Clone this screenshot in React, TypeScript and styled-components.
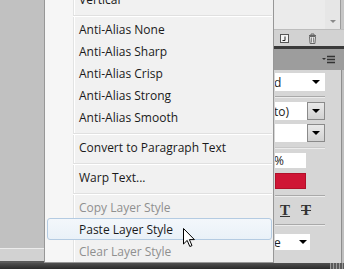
import styled, { createGlobalStyle } from 'styled-components';

const GlobalStyle = createGlobalStyle`
  html, body {
    margin: 0;
    padding: 0;
    background: #c0c0c0;
  }
`;

type Entry =
  | { kind: 'item'; label: string; disabled?: boolean; hot?: boolean }
  | { kind: 'sep' };

const entries: Entry[] = [
  { kind: 'item', label: 'Vertical' },
  { kind: 'sep' },
  { kind: 'item', label: 'Anti-Alias None' },
  { kind: 'item', label: 'Anti-Alias Sharp' },
  { kind: 'item', label: 'Anti-Alias Crisp' },
  { kind: 'item', label: 'Anti-Alias Strong' },
  { kind: 'item', label: 'Anti-Alias Smooth' },
  { kind: 'sep' },
  { kind: 'item', label: 'Convert to Paragraph Text' },
  { kind: 'sep' },
  { kind: 'item', label: 'Warp Text...' },
  { kind: 'sep' },
  { kind: 'item', label: 'Copy Layer Style', disabled: true },
  { kind: 'item', label: 'Paste Layer Style', hot: true },
  { kind: 'item', label: 'Clear Layer Style', disabled: true },
];

const App = () => {
  return (
    <Root>
      <GlobalStyle />
      <Main>
        <LeftArea>
          <Canvas />
          <StatusStrip />
        </LeftArea>

        <Menu>
          <MenuList>
            {entries.map((e, i) =>
              e.kind === 'sep' ? (
                <Separator key={i} />
              ) : (
                <MenuItem key={i} $disabled={e.disabled} $hot={e.hot}>
                  {e.label}
                </MenuItem>
              )
            )}
          </MenuList>
        </Menu>

        <Panel>
          <TopArea>
            <ListBox />
            <ScrollTrack>
              <SmallArrow />
            </ScrollTrack>
            <PanelEdge />
          </TopArea>
          <IconRow>
            <svg width="9" height="9" viewBox="0 0 9 9">
              <rect x="0.5" y="0.5" width="8" height="8" fill="#f4f4f4" stroke="#555" />
              <path d="M5 2.5v4H2.5" fill="none" stroke="#222" />
            </svg>
            <svg width="9" height="11" viewBox="0 0 9 11">
              <path d="M1 2.5h7M3 2.5V1h3v1.5" fill="none" stroke="#666" />
              <path d="M1.5 3.5h6l-0.6 7h-4.8z" fill="#e8e8e8" stroke="#666" />
              <path d="M3.5 4.5v5M5.5 4.5v5" stroke="#888" />
            </svg>
          </IconRow>
          <DarkRule />
          <Header>
            <svg width="13" height="9" viewBox="0 0 13 9">
              <path d="M0 3h4L2 5z" fill="#333" />
              <path d="M5 1.5h8M5 4.5h8M5 7.5h8" stroke="#333" strokeWidth="1.4" />
            </svg>
          </Header>
          <Body>
            <Controls>
              <Select $top={3} $w={50} $h={18}>
                <FieldText>d</FieldText>
                <Caret $right={5} />
              </Select>
              <Rule $top={5} />
              <Combo $top={4}>
                <ComboField>
                  <FieldText>to)</FieldText>
                </ComboField>
                <ComboButton>
                  <Caret />
                </ComboButton>
              </Combo>
              <Combo $top={4}>
                <ComboField />
                <ComboButton>
                  <Caret />
                </ComboButton>
              </Combo>
              <Rule $top={5} $faint />
              <Select $top={4} $w={31} $h={15}>
                <FieldText>%</FieldText>
              </Select>
              <Swatch />
              <Rule $top={6} />
              <StyleRow>
                <StyleGlyph $deco="underline">T</StyleGlyph>
                <StyleGlyph $deco="line-through">T</StyleGlyph>
              </StyleRow>
              <Rule $top={0} />
              <Select $top={8} $w={35} $h={16}>
                <FieldText>e</FieldText>
                <Caret $right={3} />
              </Select>
            </Controls>
            <RightStrip />
          </Body>
        </Panel>
      </Main>
      <Taskbar>
        <TaskbarEnd />
      </Taskbar>

      <Pointer width="12" height="19" viewBox="0 0 12 19">
        <path
          d="M0.5 0.5v15.5l3.7-3.6 2.6 6.1 2.2-0.9-2.6-6h5z"
          fill="#fff"
          stroke="#000"
          strokeWidth="1"
          strokeLinejoin="round"
        />
      </Pointer>
    </Root>
  );
};

export default App;

const Root = styled.div`
  position: relative;
  width: 344px;
  height: 269px;
  overflow: hidden;
  display: flex;
  flex-direction: column;
  font-family: 'Open Sans', 'Noto Sans', sans-serif;
`;

const Main = styled.div`
  display: flex;
  height: 263px;
`;

const LeftArea = styled.div`
  width: 44px;
  display: flex;
  flex-direction: column;
`;

const Canvas = styled.div`
  flex: 1;
  background: #c1c1c1;
`;

const StatusStrip = styled.div`
  height: 12px;
  background: #d2d2d2;
  border-top: 1px solid #ececec;
  border-bottom: 2px solid #5a5a5a;
`;

const Menu = styled.div`
  width: 225px;
  height: 262px;
  overflow: hidden;
  padding: 0 1px 0 2px;
  border-left: 1px solid #979797;
  border-right: 1px solid #979797;
  border-bottom: 1px solid #979797;
  background: linear-gradient(
    to right,
    #f6f6f6 28px,
    #e2e3e3 28px,
    #e2e3e3 29px,
    #ffffff 29px,
    #ffffff 30px,
    #f1f1f1 30px
  );
`;

const MenuList = styled.div`
  margin-top: -12px;
  display: flex;
  flex-direction: column;
`;

const MenuItem = styled.div<{ $disabled?: boolean; $hot?: boolean }>`
  height: 22px;
  line-height: 21px;
  padding-left: 31px;
  border: 1px solid transparent;
  border-radius: 3px;
  font-size: 12px;
  color: ${(p) => (p.$disabled ? '#8f8f8f' : '#1a1a1a')};
  white-space: nowrap;
  box-sizing: border-box;
  ${(p) =>
    p.$hot &&
    `
    border-color: #b4cbe2;
    background: linear-gradient(#f3f7fb, #e9f1f8);
  `}
`;

const Separator = styled.div`
  height: 8px;
  margin-left: 26px;
  box-sizing: border-box;
  padding-top: 5px;

  &::before {
    content: '';
    display: block;
    height: 1px;
    background: #e0e0e0;
    border-bottom: 1px solid #ffffff;
  }
`;

const Panel = styled.div`
  flex: 1;
  display: flex;
  flex-direction: column;
  background: #d4d4d4;
`;

const TopArea = styled.div`
  height: 30px;
  display: flex;
  border-bottom: 1px solid #bdbdbd;
  box-sizing: border-box;
`;

const ListBox = styled.div`
  width: 51px;
  background: #ebebeb;
`;

const ScrollTrack = styled.div`
  width: 15px;
  background: #e6e6e6;
  display: flex;
  justify-content: center;
  padding-top: 20px;
  box-sizing: border-box;
`;

const SmallArrow = styled.div`
  width: 0;
  height: 0;
  border-left: 3px solid transparent;
  border-right: 3px solid transparent;
  border-top: 3px solid #8a8a8a;
`;

const PanelEdge = styled.div`
  flex: 1;
  background: #c6c6c6;
  border-left: 1px solid #9c9c9c;
`;

const IconRow = styled.div`
  height: 16px;
  display: flex;
  align-items: center;
  gap: 19px;
  padding-left: 6px;
  background: #d2d2d2;
`;

const DarkRule = styled.div`
  height: 3px;
  background: #3a3a3a;
`;

const Header = styled.div`
  height: 21px;
  display: flex;
  align-items: center;
  justify-content: flex-end;
  padding-right: 9px;
  background: #9d9d9d;
`;

const Body = styled.div`
  flex: 1;
  display: flex;
`;

const Controls = styled.div`
  width: 66px;
  padding-left: 1px;
  display: flex;
  flex-direction: column;
  background: #d6d6d6;
`;

const RightStrip = styled.div`
  flex: 1;
  border-left: 1px solid #8e8e8e;
  background: #bfbfbf;
`;

const Select = styled.div<{ $top: number; $w: number; $h: number }>`
  position: relative;
  margin-top: ${(p) => p.$top}px;
  width: ${(p) => p.$w}px;
  height: ${(p) => p.$h}px;
  background: #ffffff;
  display: flex;
  align-items: center;
  overflow: hidden;
`;

const FieldText = styled.span`
  font-size: 12px;
  color: #222;
  margin-left: -1px;
  white-space: nowrap;
`;

const Caret = styled.div<{ $right?: number }>`
  width: 0;
  height: 0;
  border-left: 4px solid transparent;
  border-right: 4px solid transparent;
  border-top: 4px solid #000;
  ${(p) => (p.$right !== undefined ? `position: absolute; right: ${p.$right}px; top: 50%; margin-top: -2px;` : '')}
`;

const Rule = styled.div<{ $top: number; $faint?: boolean }>`
  margin-top: ${(p) => p.$top}px;
  width: 50px;
  height: 1px;
  background: ${(p) => (p.$faint ? '#c8c8c8' : '#a9a9a9')};
  border-bottom: 1px solid #ececec;
`;

const Combo = styled.div<{ $top: number }>`
  margin-top: ${(p) => p.$top}px;
  display: flex;
  height: 18px;
`;

const ComboField = styled.div`
  width: 32px;
  background: #ffffff;
  display: flex;
  align-items: center;
  overflow: hidden;
`;

const ComboButton = styled.div`
  width: 18px;
  box-sizing: border-box;
  border: 1px solid #8a8a8a;
  background: linear-gradient(#e9e9e9, #d2d2d2);
  display: flex;
  align-items: center;
  justify-content: center;
`;

const Swatch = styled.div`
  margin-top: 5px;
  width: 31px;
  height: 16px;
  background: #cf1535;
  box-shadow: inset 0 0 0 1px #b01029;
`;

const StyleRow = styled.div`
  height: 27px;
  display: flex;
  align-items: center;
  gap: 11px;
  padding-left: 5px;
`;

const StyleGlyph = styled.span<{ $deco: string }>`
  font-family: 'Liberation Serif', serif;
  font-weight: bold;
  font-size: 15px;
  color: #333;
  text-decoration: ${(p) => p.$deco};
`;

const Taskbar = styled.div`
  height: 6px;
  display: flex;
  justify-content: flex-end;
  background: linear-gradient(#505050, #2a2a2a);
`;

const TaskbarEnd = styled.div`
  width: 14px;
  background: repeating-linear-gradient(to right, #9a9a9a 0 1px, #5a5a5a 1px 3px);
`;

const Pointer = styled.svg`
  position: absolute;
  left: 183px;
  top: 228px;
`;
